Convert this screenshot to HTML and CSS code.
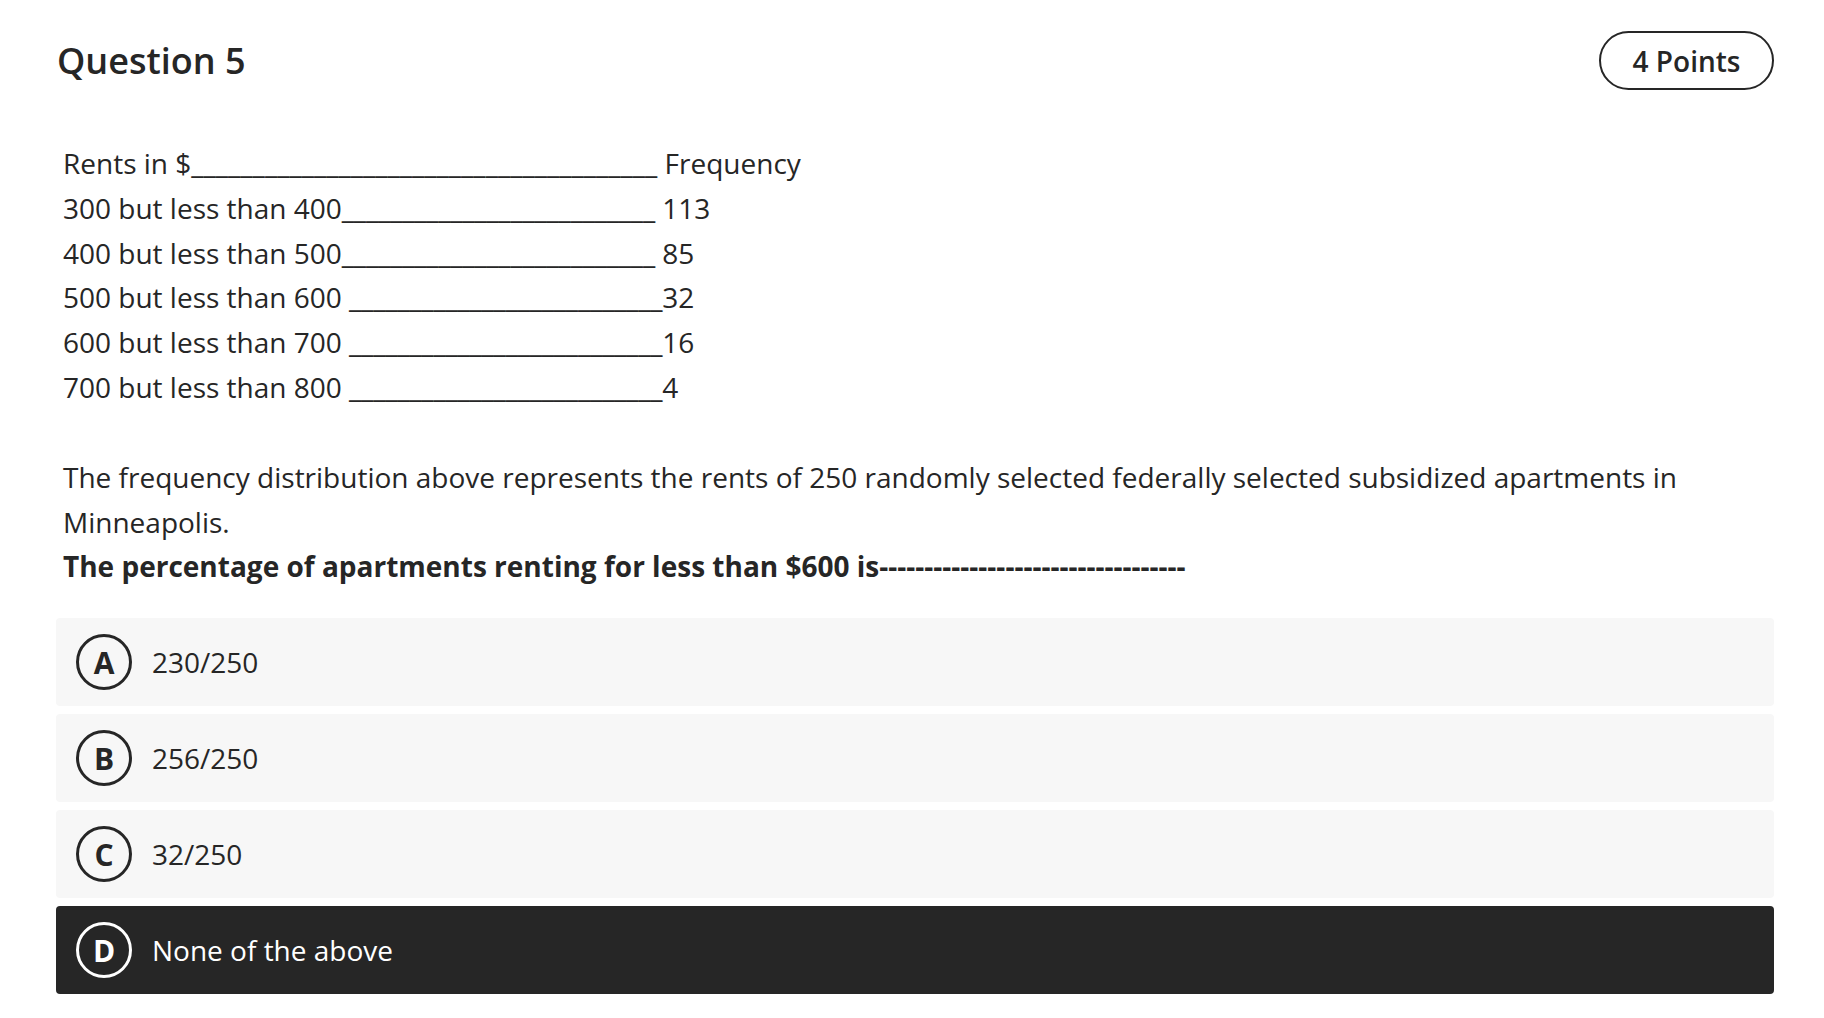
FILE: index.html
```html
<!DOCTYPE html>
<html lang="en">
<head>
<meta charset="utf-8">
<title>Question 5</title>
<link rel="stylesheet" href="styles.css">
</head>
<body>
<div class="page">
  <header class="q-header">
    <h1 class="q-title">Question 5</h1>
    <div class="q-points">4 Points</div>
  </header>
  <div class="q-body">
    <div class="freq-table">
      <div class="row">Rents in $______________________________________ Frequency</div>
      <div class="row">300 but less than 400<span class="fill">__________________________</span> 113</div>
      <div class="row">400 but less than 500<span class="fill">__________________________</span> 85</div>
      <div class="row">500 but less than 600 <span class="fill">__________________________</span>32</div>
      <div class="row">600 but less than 700 <span class="fill">__________________________</span>16</div>
      <div class="row">700 but less than 800 <span class="fill">__________________________</span>4</div>
    </div>
    <p class="q-text">The frequency distribution above represents the rents of 250 randomly selected federally selected subsidized apartments in Minneapolis.<br><strong>The percentage of apartments renting for less than $600 is----------------------------------</strong></p>
  </div>
  <div class="options">
    <div class="option"><span class="letter">A</span><span class="opt-text">230/250</span></div>
    <div class="option"><span class="letter">B</span><span class="opt-text">256/250</span></div>
    <div class="option"><span class="letter">C</span><span class="opt-text">32/250</span></div>
    <div class="option selected"><span class="letter">D</span><span class="opt-text">None of the above</span></div>
  </div>
</div>
</body>
</html>
```
FILE: styles.css
```css
* { box-sizing: border-box; }
html, body { margin: 0; padding: 0; background: #fff; }
body {
  font-family: "Open Sans", "Noto Sans", "Liberation Sans", sans-serif;
  color: #262626;
}
.page {
  padding: 31px 50px 0 56px;
}
.q-header {
  display: flex;
  justify-content: space-between;
  align-items: center;
}
.q-title {
  margin: 0 0 0 1px;
  font-size: 36px;
  font-weight: 600;
  line-height: 59px;
}
.q-points {
  height: 59px;
  width: 175px;
  border: 2px solid #262626;
  border-radius: 30px;
  display: flex;
  align-items: center;
  justify-content: center;
  font-size: 28px;
  font-weight: 600;
}
.q-body {
  padding: 51px 7px 0 7px;
  font-size: 28px;
  line-height: 44.8px;
}
.freq-table .row { white-space: pre; }
.freq-table .fill { letter-spacing: -0.22px; }
.q-text {
  margin: 45px 0 0 0;
}
.q-text strong { font-weight: 700; }
.options {
  margin-top: 29px;
  display: flex;
  flex-direction: column;
  gap: 8px;
}
.option {
  height: 88px;
  background: #f7f7f7;
  border-radius: 4px;
  display: flex;
  align-items: center;
  padding-left: 20px;
  font-size: 28px;
}
.letter {
  width: 56px;
  height: 56px;
  border: 3px solid #262626;
  border-radius: 50%;
  display: flex;
  align-items: center;
  justify-content: center;
  font-weight: 700;
  font-size: 30px;
  margin-right: 20px;
}
.option.selected {
  background: #262626;
  color: #fff;
}
.option.selected .letter { border-color: #fff; }
```
